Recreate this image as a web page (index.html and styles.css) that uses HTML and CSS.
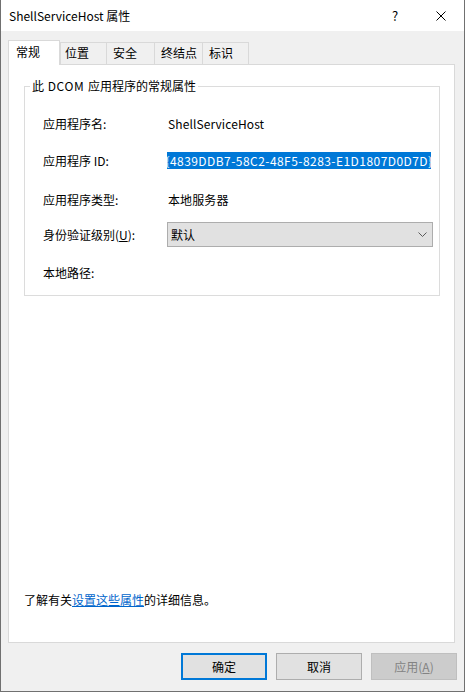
FILE: index.html
```html
<!DOCTYPE html>
<html lang="zh-CN">
<head>
<meta charset="utf-8">
<title>ShellServiceHost 属性</title>
<link rel="stylesheet" href="styles.css">
</head>
<body>
<div class="window">
  <div class="titlebar">
    <span class="title">ShellServiceHost 属性</span>
    <div class="caption-btns">
      <span class="cap">?</span>
      <span class="cap"><svg width="10" height="10" viewBox="0 0 10 10"><path d="M0.5 0.5L9.5 9.5M9.5 0.5L0.5 9.5" stroke="#000" stroke-width="1" fill="none"/></svg></span>
    </div>
  </div>
  <div class="tabs">
    <div class="tab active">常规</div>
    <div class="tab after-active">位置</div>
    <div class="tab">安全</div>
    <div class="tab">终结点</div>
    <div class="tab narrow">标识</div>
  </div>
  <div class="panel">
    <div class="group">
      <div class="legend">此 <span class="latin">DCOM</span> 应用程序的常规属性</div>
      <div class="row r1"><span class="label">应用程序名:</span><span class="value">ShellServiceHost</span></div>
      <div class="row r2"><span class="label">应用程序 ID:</span><span class="selected"><span>{4839DDB7-58C2-48F5-8283-E1D1807D0D7D}</span></span></div>
      <div class="row r3"><span class="label">应用程序类型:</span><span class="value">本地服务器</span></div>
      <div class="row r4"><span class="label">身份验证级别(<u>U</u>):</span><span class="select"><span>默认</span><svg width="9" height="5" viewBox="0 0 9 5"><path d="M0.5 0.5L4.5 4.5L8.5 0.5" stroke="#5a5a5a" stroke-width="1" fill="none"/></svg></span></div>
      <div class="row r5"><span class="label">本地路径:</span></div>
    </div>
    <p class="info">了解有关<a href="#">设置这些属性</a>的详细信息。</p>
  </div>
  <div class="buttons">
    <span class="btn default">确定</span>
    <span class="btn">取消</span>
    <span class="btn disabled">应用(<u>A</u>)</span>
  </div>
</div>
</body>
</html>
```
FILE: styles.css
```css
html, body {
  margin: 0;
  padding: 0;
}
body {
  font-family: "Noto Sans CJK SC", "Noto Sans", sans-serif;
  font-size: 12px;
  color: #000;
  background: #f0f0f0;
}
.window {
  width: 465px;
  height: 692px;
  box-sizing: border-box;
  border: 1px solid #707070;
  border-top: none;
  background: #f0f0f0;
  display: flex;
  flex-direction: column;
}
.titlebar {
  height: 31px;
  flex: none;
  background: #fff;
  display: flex;
  align-items: center;
  padding-left: 8px;
}
.title {
  line-height: 16px;
}
.caption-btns {
  margin-left: auto;
  display: flex;
  height: 31px;
}
.cap {
  width: 46px;
  display: flex;
  align-items: center;
  justify-content: center;
  font-size: 13px;
}
.tabs {
  display: flex;
  align-items: flex-start;
  height: 25px;
  margin: 9px 0 0 7px;
  position: relative;
  z-index: 1;
}
.tab {
  box-sizing: border-box;
  height: 22px;
  margin-top: 2px;
  width: 49px;
  margin-left: -1px;
  padding-left: 6px;
  border: 1px solid #d9d9d9;
  border-bottom: none;
  background: #f0f0f0;
  line-height: 20px;
  white-space: nowrap;
}
.tab.after-active {
  width: 47px;
  padding-left: 4px;
  margin-left: 0;
}
.tab.narrow {
  width: 47px;
}
.tab.active {
  margin: 0;
  height: 25px;
  width: 52px;
  padding-left: 7px;
  background: #fff;
  line-height: 22px;
  position: relative;
  z-index: 2;
}
.panel {
  flex: none;
  box-sizing: border-box;
  width: 447px;
  height: 579px;
  margin: -1px 0 0 7px;
  border: 1px solid #d9d9d9;
  background: #fff;
  display: flex;
  flex-direction: column;
}
.group {
  margin: 21px 0 0 15px;
  width: 416px;
  box-sizing: border-box;
  border: 1px solid #dcdcdc;
  padding-bottom: 13px;
}
.legend {
  width: fit-content;
  margin: -9px 0 0 5px;
  padding: 0 2px;
  background: #fff;
  line-height: 16px;
  word-spacing: 1px;
}
.latin {
  letter-spacing: 0.6px;
}
.row {
  display: flex;
  align-items: center;
  height: 20px;
  padding-left: 18px;
}
.r1 { margin-top: 19px; }
.r2 { margin-top: 17px; }
.r3 { margin-top: 19px; }
.r4 { margin-top: 13px; height: 25px; }
.r5 { margin-top: 15px; }
.label {
  width: 124px;
  flex: none;
  white-space: nowrap;
}
.value {
  padding-left: 1px;
  letter-spacing: 0.1px;
}
.selected {
  width: 264px;
  height: 17px;
  background: #0078d7;
  color: #fff;
  display: flex;
  justify-content: center;
  align-items: center;
  overflow: hidden;
  white-space: nowrap;
  letter-spacing: 0.45px;
}
.select {
  box-sizing: border-box;
  width: 266px;
  height: 25px;
  border: 1px solid #adadad;
  background: #e1e1e1;
  display: flex;
  align-items: center;
  justify-content: space-between;
  padding: 0 5px 0 3px;
}
.info {
  margin: auto 0 34px 15px;
  line-height: 16px;
}
.info a {
  color: #0066cc;
  text-decoration: underline;
}
.buttons {
  display: flex;
  justify-content: flex-end;
  gap: 9px;
  margin-top: 10px;
  padding-right: 7px;
}
.btn {
  box-sizing: border-box;
  width: 86px;
  height: 27px;
  border: 1px solid #adadad;
  background: #e1e1e1;
  display: flex;
  align-items: center;
  justify-content: center;
}
.btn.default {
  border: 2px solid #0078d7;
}
.btn.disabled {
  background: #cccccc;
  border-color: #bfbfbf;
  color: #838383;
}
```
